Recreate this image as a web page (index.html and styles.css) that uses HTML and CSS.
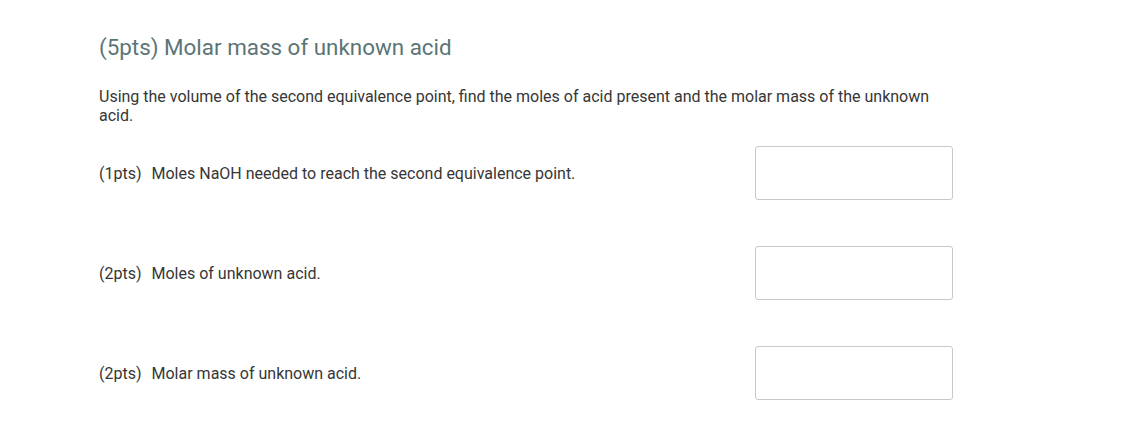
FILE: index.html
```html
<!DOCTYPE html>
<html>
<head>
<meta charset="utf-8">
<link rel="stylesheet" href="styles.css">
</head>
<body>
<div class="page">
  <h2 class="title">(5pts) Molar mass of unknown acid</h2>
  <p class="intro">Using the volume of the second equivalence point, find the moles of acid present and the molar mass of the unknown acid.</p>
  <div class="rows">
    <div class="row">
      <div class="label"><span class="pts">(1pts)</span>Moles NaOH needed to reach the second equivalence point.</div>
      <input class="answer" type="text">
    </div>
    <div class="row">
      <div class="label"><span class="pts">(2pts)</span>Moles of unknown acid.</div>
      <input class="answer" type="text">
    </div>
    <div class="row">
      <div class="label"><span class="pts">(2pts)</span>Molar mass of unknown acid.</div>
      <input class="answer" type="text">
    </div>
  </div>
</div>
</body>
</html>
```
FILE: styles.css
```css
html, body {
  margin: 0;
  padding: 0;
  background: #ffffff;
}
body {
  font-family: Roboto, "Liberation Sans", sans-serif;
  color: #363636;
}
.page {
  width: 854px;
  padding: 34px 0 0 99px;
}
.title {
  margin: 0;
  font-size: 22.4px;
  font-weight: 400;
  line-height: 26px;
  color: #5b7576;
}
.intro {
  margin: 27px 0 0 0;
  font-size: 16px;
  line-height: 19px;
  padding-right: 22px;
}
.rows {
  margin-top: 21px;
  display: flex;
  flex-direction: column;
  gap: 46px;
}
.row {
  display: flex;
  align-items: center;
  justify-content: space-between;
}
.label {
  font-size: 16px;
  line-height: 19px;
}
.pts {
  margin-right: 10px;
}
.answer {
  width: 198px;
  height: 54px;
  box-sizing: border-box;
  border: 1px solid #c8c8c8;
  border-radius: 3px;
  background: #fff;
  margin: 0;
  padding: 0 8px;
  outline: none;
}
```
